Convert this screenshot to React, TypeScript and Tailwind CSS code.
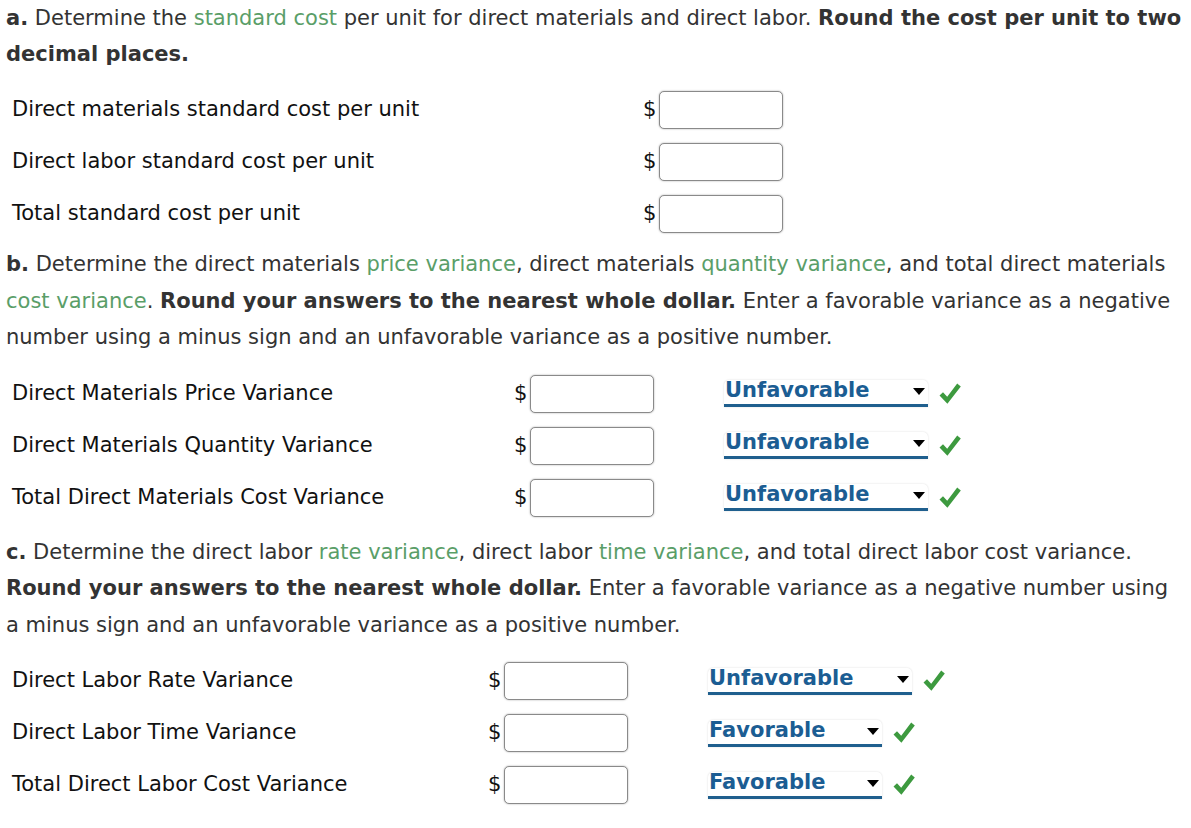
import React from 'react';

const font = { fontFamily: '"DejaVu Sans", Verdana, sans-serif' };

function Term({ children }: { children: React.ReactNode }) {
  return <span className="text-[#5a9e68]">{children}</span>;
}

function Check() {
  return (
    <svg width="24" height="26" viewBox="0 0 24 26" className="shrink-0">
      <path
        d="M1.5 14.6 L5 11.2 L9.2 15.8 L19.2 2.4 L22.8 5.6 L9.4 22.8 Z"
        fill="#3d9a3f"
      />
    </svg>
  );
}

function Money() {
  return (
    <div className="flex items-center">
      <span className="text-[21px] text-[#111] w-[16px]">$</span>
      <div className="w-[124px] h-[38px] rounded-[5px] border border-[#8a8a8a] bg-white shadow-[0_0_2px_rgba(0,0,0,0.35)]" />
    </div>
  );
}

function Choice({ value, width }: { value: string; width: number }) {
  return (
    <div
      className="relative h-[27px] bg-white rounded-t-[5px] border-b-[3px] border-[#1f5f8e] shadow-[0_0_2px_rgba(0,0,0,0.15)]"
      style={{ width }}
    >
      <span className="absolute left-[1px] top-[-4px] text-[21px] font-bold text-[#1b5d93] leading-[28px]">
        {value}
      </span>
      <span className="absolute right-[3px] top-[8px] w-0 h-0 border-l-[6px] border-r-[6px] border-t-[7px] border-l-transparent border-r-transparent border-t-black" />
    </div>
  );
}

interface RowProps {
  label: string;
  labelWidth: number;
  select?: { value: string; width: number; gap: number };
}

function Row({ label, labelWidth, select }: RowProps) {
  return (
    <div className="flex items-center h-[52px]">
      <div className="pl-[6px] text-[21px] text-[#111]" style={{ width: labelWidth }}>
        {label}
      </div>
      <Money />
      {select && (
        <div className="flex items-center gap-[10px]" style={{ marginLeft: select.gap }}>
          <Choice value={select.value} width={select.width} />
          <Check />
        </div>
      )}
    </div>
  );
}

export default function App() {
  return (
    <div className="w-[1191px] h-[828px] bg-white pl-[6px] pr-[8px] text-[#333]" style={font}>
      <p className="text-[21px] leading-[36px]">
        <b>a.</b> Determine the <Term>standard cost</Term> per unit for direct materials and direct labor.{' '}
        <b>Round the cost per unit to two decimal places.</b>
      </p>
      <div className="mt-[12px]">
        <Row label="Direct materials standard cost per unit" labelWidth={637} />
        <Row label="Direct labor standard cost per unit" labelWidth={637} />
        <Row label="Total standard cost per unit" labelWidth={637} />
      </div>

      <p className="mt-[6px] text-[21px] leading-[36.5px]">
        <b>b.</b> Determine the direct materials <Term>price variance</Term>, direct materials{' '}
        <Term>quantity variance</Term>, and total direct materials <Term>cost variance</Term>.{' '}
        <b>Round your answers to the nearest whole dollar.</b> Enter a favorable variance as a negative
        number using a minus sign and an unfavorable variance as a positive number.
      </p>
      <div className="mt-[12px]">
        <Row label="Direct Materials Price Variance" labelWidth={508} select={{ value: 'Unfavorable', width: 204, gap: 70 }} />
        <Row label="Direct Materials Quantity Variance" labelWidth={508} select={{ value: 'Unfavorable', width: 204, gap: 70 }} />
        <Row label="Total Direct Materials Cost Variance" labelWidth={508} select={{ value: 'Unfavorable', width: 204, gap: 70 }} />
      </div>

      <p className="mt-[10px] text-[21px] leading-[36.5px]">
        <b>c.</b> Determine the direct labor <Term>rate variance</Term>, direct labor <Term>time variance</Term>, and
        total direct labor cost variance. <b>Round your answers to the nearest whole dollar.</b> Enter a favorable
        variance as a negative number using a minus sign and an unfavorable variance as a positive number.
      </p>
      <div className="mt-[12px]">
        <Row label="Direct Labor Rate Variance" labelWidth={482} select={{ value: 'Unfavorable', width: 204, gap: 80 }} />
        <Row label="Direct Labor Time Variance" labelWidth={482} select={{ value: 'Favorable', width: 174, gap: 80 }} />
        <Row label="Total Direct Labor Cost Variance" labelWidth={482} select={{ value: 'Favorable', width: 174, gap: 80 }} />
      </div>
    </div>
  );
}
